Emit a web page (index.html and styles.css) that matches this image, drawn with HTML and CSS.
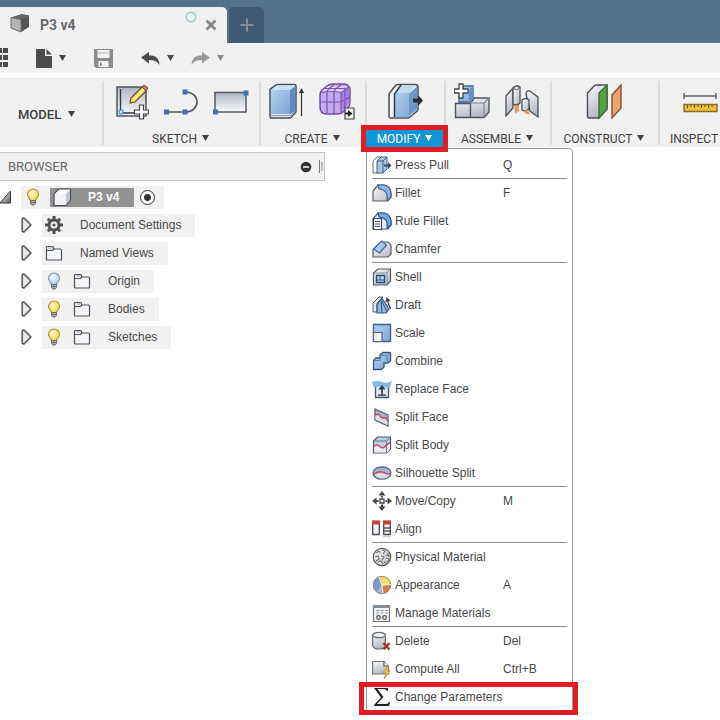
FILE: index.html
```html
<!DOCTYPE html>
<html lang="en">
<head>
<meta charset="utf-8">
<title>P3 v4</title>
<link rel="stylesheet" href="styles.css">
</head>
<body>
<svg class="defs" aria-hidden="true">
  <defs>
    <linearGradient id="blue" x1="0" y1="0" x2="1" y2="1"><stop offset="0" stop-color="#b4d0ee"/><stop offset="1" stop-color="#7ba6d8"/></linearGradient>
    <linearGradient id="grey" x1="0" y1="0" x2="1" y2="1"><stop offset="0" stop-color="#fbfbfc"/><stop offset="1" stop-color="#b4b8c0"/></linearGradient>
    <linearGradient id="sheet" x1="0" y1="0" x2="0" y2="1"><stop offset="0" stop-color="#b0b6c2"/><stop offset="1" stop-color="#fafbfd"/></linearGradient>
    <linearGradient id="plate" x1="0" y1="0" x2="0.4" y2="1"><stop offset="0" stop-color="#fafbfd"/><stop offset="1" stop-color="#b4b9c4"/></linearGradient>
    <linearGradient id="tri" x1="0" y1="0" x2="1" y2="1"><stop offset="0.2" stop-color="#f2f2f2"/><stop offset="1" stop-color="#555"/></linearGradient>
    <radialGradient id="lit" cx="0.4" cy="0.35" r="0.7"><stop offset="0" stop-color="#fffbd0"/><stop offset="1" stop-color="#f5d535"/></radialGradient>
    <radialGradient id="unlit" cx="0.4" cy="0.35" r="0.7"><stop offset="0" stop-color="#fff"/><stop offset="1" stop-color="#a9c8f2"/></radialGradient>
    <symbol id="caret" viewBox="0 0 7 6"><path d="M0 0h7L3.500 6z" fill="currentColor"/></symbol>
    <symbol id="toggle" viewBox="0 0 11 16"><path d="M1.200 1.500 3 1 10 8 3 15 1.200 14.500z" fill="#e6e6e6" stroke="#555" stroke-width="1.500" stroke-linejoin="round"/></symbol>
    <symbol id="folder" viewBox="0 0 18 18"><path d="M1.500 15.500v-12q0-1 1-1h5q1 0 1 1v1.500h7q1 0 1 1v9.500q0 .5-.5.5H2q-.5 0-.5-.5z" fill="#f5f6f8" stroke="#4c515c" stroke-width="1.200"/><path d="M2 6.500h5.500L9 5" fill="none" stroke="#4c515c" stroke-width="1.200"/><path d="M3.500 3.500h4v1h-4z" fill="#9aa0ac"/></symbol>
    <symbol id="bulb" viewBox="0 0 18 18"><path d="M9 1a5.500 5.500 0 0 0-5.500 5.500C3.500 9 6.300 10 6.300 12.500h5.400C11.700 10 14.500 9 14.500 6.500A5.500 5.500 0 0 0 9 1z" stroke-width="1.100"/><path d="M6.500 12.500h5v3.200L10 17H8l-1.500-1.300z" fill="#aeb2ba" stroke="#666b75"/><path d="M7 14.500h4" stroke="#666b75"/></symbol>
  </defs>
</svg>

<header class="tabs">
  <div class="tab">
    <svg class="tab-cube" viewBox="0 0 20 19"><path d="M1 3.500 12 0l7 1.500V13L11 18 1 14z" fill="#555"/><path d="M1 3.500 11 5.500V18L1 14z" fill="#b5b5b5" stroke="#6a6a6a"/><path d="M1 3.500 12 .500l7 1.500-8 3.500z" fill="#686868"/></svg>
    <span class="tab-title">P3 v4</span>
    <svg class="tab-status" viewBox="0 0 12 12"><circle cx="6" cy="6" r="4.800" fill="none" stroke="#93cfbf" stroke-width="1.500"/></svg>
    <button class="tab-close" aria-label="Close"><svg viewBox="0 0 12 12"><path d="m1.500 1.500 9 9m0-9-9 9" stroke="#888" stroke-width="2.800"/></svg></button>
  </div>
  <button class="tab-new" aria-label="New tab"><svg viewBox="0 0 14 14"><path d="M7 .500v13M.500 7h13" stroke="#878f98" stroke-width="2"/></svg></button>
</header>

<nav class="quickbar" aria-label="Quick access">
  <button aria-label="Data panel"><svg class="q-grid" viewBox="0 0 8 20"><path d="M0 0h2v5H0zM3 0h5v5H3zM0 7h2v5H0zM3 7h5v5H3zM0 14h2v5H0zM3 14h5v5H3z" fill="#4b4b4b"/></svg></button>
  <button aria-label="File"><svg class="q-doc" viewBox="0 0 16 19"><path d="M0 0h9v7h7v12H0z" fill="#4b4b4b"/><path d="M10.500 0 16 5.500h-5.500z" fill="#4b4b4b"/></svg><svg class="caret"><use href="#caret"/></svg></button>
  <button aria-label="Save"><svg class="q-save" viewBox="0 0 19 19"><path d="M0 0h19v19H2l-2-2z" fill="#8c8c8c"/><path d="M3.500 1h12v8h-12zM4.500 12h10v6h-10z" fill="#f3f3f3"/><path d="M3.500 4h12" stroke="#b5b5b5"/><path d="M6 13.500h1.500V17H6z" fill="#777"/></svg></button>
  <div class="history">
    <button aria-label="Undo"><svg class="q-arrow" viewBox="0 0 19 13"><path d="M0 5.500 8 0v3.500c6 0 10 1.500 10.500 9.500C16 9 13 8 8 8v3.500z" fill="#4b4b4b"/></svg><svg class="caret"><use href="#caret"/></svg></button>
    <button class="dim" aria-label="Redo"><svg class="q-arrow" viewBox="0 0 19 13"><path d="M19 5.500 11 0v3.500C5 3.500 1 5 .500 13 3 9 6 8 11 8v3.500z" fill="#999"/></svg><svg class="caret"><use href="#caret"/></svg></button>
  </div>
</nav>

<nav class="ribbon" aria-label="Toolbar">
  <div class="group model">
    <button class="label">MODEL <svg class="caret"><use href="#caret"/></svg></button>
  </div>
  <div class="group sketch">
    <div class="icons">
      <svg viewBox="0 0 36 40"><path d="M4 5h29v29H4z" fill="url(#sheet)" stroke="#50545e" stroke-width="1.500"/><path d="M7.500 7v24H30" fill="none" stroke="#30343c" stroke-width="1.300"/><path d="M6 28h4v4H6z" fill="#b5dcf5" stroke="#3a86c8"/><path d="m18 16 11-11q3 0 4 4L22 20l-5 1z" fill="#f6d958" stroke="#5d532c" stroke-width="1.200"/><path d="m20 18 11-11" stroke="#fff3ac" stroke-width="1.500"/><path d="m29 5 2-2 4 3-2 3z" fill="#c87c6c" stroke="#6a4a40"/><path d="M26.500 23h4v5h5v4h-5v5h-4v-5h-5v-4h5z" fill="#fff" stroke="#444" stroke-width="1.200"/></svg>
      <svg viewBox="0 0 36 40"><path d="M4 30h18c16 0 16-20 0-20" fill="none" stroke="#555" stroke-width="1.600"/><path d="M1 27.500h5v5H1zM19.500 27.500h5v5h-5zM19.500 7.500h5v5h-5z" fill="#3f6fbd"/></svg>
      <svg viewBox="0 0 36 40"><path d="M2 10.500h31v19.500H2z" fill="url(#sheet)" stroke="#555961" stroke-width="1.500"/><path d="M0 27.500h5v5H0zM30.500 8.500h5v5h-5z" fill="#3f6fbd"/></svg>
    </div>
    <button class="label">SKETCH <svg class="caret"><use href="#caret"/></svg></button>
  </div>
  <div class="group create">
    <div class="icons">
      <svg viewBox="0 0 36 40"><path d="M1 8q0-1 1-1.500L7 3q1-.5 2-.500h16.500q1.500 0 1.500 1.500V29q0 1-1 2l-4 4.500q-1 .5-2 .5H2.500Q1 36 1 34.500z" fill="#e4e6ea" stroke="#4a5059" stroke-width="1.500"/><path d="M2 8h19v24H2z" fill="url(#blue)"/><path d="M2 8 8 3.500h17.500L21 8z" fill="#cfe1f4"/><path d="M21 8 26.300 4v25L21 32z" fill="#628bbd"/><path d="M2 33.500h19l5-4" fill="none" stroke="#99a"/><path d="M32.500 34V9" stroke="#333" stroke-width="1.200"/><path d="m32.500 6 2.500 5h-5z" fill="#333"/></svg>
      <svg viewBox="0 0 36 40"><path d="M1 13Q1 9 4 7l4-3q2-2 6-2h10q6 0 7 5v12q0 6-4 9l-3 2q-2 2-6 2H8q-7 0-7-7z" fill="#c9a8f2" stroke="#6d49a3" stroke-width="1.400"/><path d="M3 10q2-3 6-6h18l-5 6z" fill="#e2cffc"/><path d="M22 10q5-3 8-4v14q-3 6-8 10z" fill="#a981e0"/><path d="M2 10.500q10-2 20 0 5-2 8-6M1 20h21l9-5M8 9v22M15 9v23M22 10v20M8 9q3-4 7-6M15 9q3-4 7-6M5 6.500h21v20" fill="none" stroke="#7654aa" stroke-width="1.200"/><path d="M26 26h9v11h-9z" fill="#f3f3f3" stroke="#444" stroke-width="1.200"/><path d="M26 30.500h3V28l4.500 3.500L29 35v-2.500h-3z" fill="#222"/></svg>
    </div>
    <button class="label">CREATE <svg class="caret"><use href="#caret"/></svg></button>
  </div>
  <div class="group modify">
    <div class="icons">
      <svg viewBox="0 0 36 40"><path d="M2 12 8 4q1-1.500 3-1.500h17q3 0 3 3V27q0 2-2 3l-6 5q-1 1-3 1H4q-2 0-2-2z" fill="#f1f3f6" stroke="#4a5059" stroke-width="1.500"/><path d="M8 12 14 4h13l-5 8v23H8z" fill="url(#blue)"/><path d="m9 11 6-7.500h13L22 11z" fill="#c3daf3"/><path d="M22 12 30.200 4v23L22 34z" fill="#6b97ca"/><path d="M7.500 35V12L14 3" fill="none" stroke="#343a43" stroke-width="1.500"/><path d="M26 16.500h5V13l5 5.500-5 5.500v-3.500h-5z" fill="#2d2d2d"/></svg>
    </div>
    <button class="label active" aria-expanded="true">MODIFY <svg class="caret"><use href="#caret"/></svg></button>
    <ul class="menu">
      <li><button><svg viewBox="0 0 20 20"><path d="M1 6 5 2h5v13l-4 3H1z" fill="#fff" stroke="#5b6b7f"/><path d="M5 6 9 2h6v12l-4 4H5z" fill="#a9c7e9" stroke="#4b607b"/><path d="m11 6 4-4M5 6h6v12" fill="none" stroke="#4b607b"/><path d="M12 9.500h4V7l3.500 3.500L16 14v-2.500h-4z" fill="#454b54"/></svg><span>Press Pull</span><kbd>Q</kbd></button></li>
      <li class="split"><button><svg viewBox="0 0 20 20"><path d="M1 8 6 2h6q6 1 7 8v4l-3 4H1z" fill="url(#grey)" stroke="#565c67" stroke-width="1.200"/><path d="M6 2h6q6 1 7 8v4l-4 3c1-8-2-10-8-11z" fill="#8db6e6" stroke="#42608a" stroke-width="1.200"/></svg><span>Fillet</span><kbd>F</kbd></button></li>
      <li><button><svg viewBox="0 0 20 20"><path d="M1 8 6 2h6q6 1 7 8v4l-3 4H1z" fill="#eef" stroke="#42608a" stroke-width="1.200"/><path d="M6 2h6q6 1 7 8v4l-4 3c1-8-2-10-8-11z" fill="#72a8e6" stroke="#34548a" stroke-width="1.200"/><path d="M1.500 7.500h8v11h-8z" fill="#fff" stroke="#36465b" stroke-width="1.200"/><path d="M3 10.500h5M3 13h5M3 15.500h5" stroke="#36465b"/></svg><span>Rule Fillet</span></button></li>
      <li><button><svg viewBox="0 0 20 20"><path d="M1 11 9 3h7l3 3v9l-3 3H1z" fill="url(#grey)" stroke="#565c67" stroke-width="1.200"/><path d="m1.500 10 8-8 5 4-7 8z" fill="#a9cbf0" stroke="#45648c" stroke-width="1.200"/></svg><span>Chamfer</span></button></li>
      <li class="split"><button><svg viewBox="0 0 20 20"><path d="M1.500 6 6 2h12.500v12L15 18H1.500z" fill="url(#grey)" stroke="#50565f" stroke-width="1.200"/><path d="M2 6h13v12M15 6l3-4" fill="none" stroke="#868c96"/><path d="M4.500 8.500h8v7h-8z" fill="#c6def4" stroke="#234a78" stroke-width="1.400"/><path d="M8 9v4H5M8 13h4" stroke="#234a78" fill="none"/></svg><span>Shell</span></button></li>
      <li><button><svg viewBox="0 0 20 20"><path d="M1 17V8l6-6h4L5 9v8z" fill="#e6e8ec" stroke="#565c67"/><path d="m5 9 5-6 7 11-3 4H5z" fill="#8db3df" stroke="#3f587a" stroke-width="1.200"/><path d="m9 4 1 14M10 6l5 11" stroke="#3f587a"/><path d="m18.500 14-3-8" stroke="#444" stroke-width="1.300"/><path d="m13.500 7 1-5 4 4z" fill="#444"/></svg><span>Draft</span></button></li>
      <li><button><svg viewBox="0 0 20 20"><path d="M1.500 1.500h17v17h-17z" fill="url(#blue)" stroke="#426089" stroke-width="1.400"/><path d="M1.500 9.500h8.500v9H1.500z" fill="#f1f2f4" stroke="#5d6673" stroke-width="1.200"/></svg><span>Scale</span></button></li>
      <li><button><svg viewBox="0 0 20 20"><path d="M1.500 9.500 4 7h4V4l3-2.500h7.500V10L16 12h-4v4l-2.500 2.500h-8z" fill="url(#blue)" stroke="#395374" stroke-width="1.300" stroke-linejoin="round"/><path d="M2 9.500h6V7M8 4.500h7v7M15 4.500l3-3" stroke="#5a80ae" fill="none"/></svg><span>Combine</span></button></li>
      <li><button><svg viewBox="0 0 20 20"><path d="M3.500 5h13v13.500h-13z" fill="#e1e5ea" stroke="#4a5565" stroke-width="1.300"/><path d="M0 3q5-2 10 0t10-1l-2 6q-4 1-8 0t-8 1z" fill="#8cb8e8"/><path d="M10 16V9" stroke="#223a5c" stroke-width="1.600"/><path d="m10 6 3.500 4.500h-7zM6 15.500h8v1.300H6z" fill="#223a5c"/></svg><span>Replace Face</span></button></li>
      <li><button><svg viewBox="0 0 20 20"><path d="m3 2 13 6v11L3 13z" fill="#a5b4c9" stroke="#556379" stroke-width="1.300"/><path d="m3.500 8 3-1 4 5 2-1 3 3v4l-12-5.500z" fill="#dce1e8"/><path d="m3 8 3-1 4 4 3-.5 3 3.500" fill="none" stroke="#cb464d" stroke-width="1.400"/></svg><span>Split Face</span></button></li>
      <li><button><svg viewBox="0 0 20 20"><path d="m1.500 6 4-4h13v12l-4 4h-13z" fill="#c0d0e4" stroke="#4c5663" stroke-width="1.200"/><path d="M2 11.500q3-3 6 0t6-1l4-3V14l-3 3.500H2z" fill="#e7e8eb"/><path d="M2 11.500q3-3 6 0t6-1l4-3" fill="none" stroke="#cb464d" stroke-width="1.400"/><path d="M2 6h12.500v12M14.500 6l4-4" fill="none" stroke="#6b7787"/></svg><span>Split Body</span></button></li>
      <li><button><svg viewBox="0 0 20 20"><ellipse cx="10" cy="10" rx="9" ry="6.200" fill="#9cb6d8" stroke="#555f70" stroke-width="1.200"/><path d="M2 11q8-2 16 0-2 5-8 4.500T2 11z" fill="#d8dce2"/><path d="M2 11c3-1 4-3 8-2s4 2 8 2" fill="none" stroke="#cb464d" stroke-width="1.500"/></svg><span>Silhouette Split</span></button></li>
      <li class="split"><button><svg viewBox="0 0 20 20"><path d="M8 8h4v4H8z" fill="#fff" stroke="#444" stroke-width="1.300"/><path d="M10 0 6.500 4.500h7zM10 20l-3.500-4.500h7zM0 10l4.500-3.500v7zM20 10l-4.500-3.500v7zM9 4h2v2.500H9zM9 13.500h2V16H9zM4 9h2.500v2H4zM13.500 9H16v2h-2.500z" fill="#444"/></svg><span>Move/Copy</span><kbd>M</kbd></button></li>
      <li><button><svg viewBox="0 0 20 20"><path d="M.7 2.500h6.600v13H.7zM11.700 2.500h6.600v13h-6.600z" fill="#f4f4f5" stroke="#434952" stroke-width="1.300"/><path d="M0 1.500h8v4H0zM11 1.500h8v4h-8z" fill="#c74432"/><path d="M12 9h6M12 12h6" stroke="#555" stroke-width="1.300"/><path d="M11 17.500h8" stroke="#ccc" stroke-width="1.500"/></svg><span>Align</span></button></li>
      <li class="split"><button><svg viewBox="0 0 20 20"><circle cx="10" cy="10" r="8.700" fill="url(#grey)" stroke="#555" stroke-width="1.200"/><path d="m4 6 3-2 1 2M10 3l3 1-2 3M15 6l2 3-3-1M3 10l3-1 1 3-3 2M9 9l3 1-2 3M14 11l3 1-2 3M6 15l3-1 2 3M12 15l2 1" fill="#fff" stroke="#6a6a6a" stroke-width="1.100"/></svg><span>Physical Material</span></button></li>
      <li><button><svg viewBox="0 0 20 20"><path d="M10 10 7 1.500A9 9 0 0 0 5 17.500z" fill="#789bd0"/><path d="M10 10 7 1.500A9 9 0 0 1 19 9.500z" fill="#f4d45b"/><path d="m10 10 9-.5A9 9 0 0 1 11 19z" fill="#dd7949"/><path d="m10 10 1 9a9 9 0 0 1-6-1.500z" fill="#a8b7ce"/><path d="m10 10 2-7 6 5-6 3z" fill="#f9df6c"/><circle cx="10" cy="10" r="8.700" fill="none" stroke="#8f8b86"/><path d="M10 10 7 2M10 10l9-.5M10 10l1 8.500" stroke="#f5efe0"/></svg><span>Appearance</span><kbd>A</kbd></button></li>
      <li><button><svg viewBox="0 0 20 20"><path d="M1.500 2.500h16v16h-16z" fill="#f3f4f5" stroke="#6b737e" stroke-width="1.200"/><path d="M1 2h17v3H1z" fill="#858d98"/><path d="M4 7.500h3M8.500 7.500h3M13 7.500h3M4 10h3M8.500 10h3M13 10h3" stroke="#878f9a" stroke-width="1.200"/><circle cx="6.500" cy="14.500" r="1.800" fill="#fff" stroke="#444" stroke-width="1.200"/><circle cx="12.500" cy="14.500" r="1.800" fill="#fff" stroke="#444" stroke-width="1.200"/></svg><span>Manage Materials</span></button></li>
      <li class="split"><button><svg viewBox="0 0 20 20"><path d="M.7 4v11q1 3 6.300 3t6.300-3V4z" fill="url(#plate)" stroke="#656c76" stroke-width="1.200"/><ellipse cx="7" cy="4" rx="6.300" ry="2.700" fill="#eff1f3" stroke="#656c76" stroke-width="1.200"/><path d="m11.500 12 6 6.500m0-6.500-6 6.500" stroke="#b22d22" stroke-width="2.400"/></svg><span>Delete</span><kbd>Del</kbd></button></li>
      <li><button><svg viewBox="0 0 20 20"><path d="M.6 2.500H12L16.500 7v8H.6z" fill="url(#plate)" stroke="#6f757f" stroke-width="1.200"/><path d="M12 2.500V7h4.500" fill="#fff" stroke="#4e535b" stroke-width="1.200"/><path d="m15 8-4 6h3l-2 6 6-8h-3l2-4z" fill="#f8c442" stroke="#c08a2d" stroke-width=".8"/></svg><span>Compute All</span><kbd>Ctrl+B</kbd></button></li>
      <li class="marked"><button><svg viewBox="0 0 20 20"><path d="M2 1h14v3h-1q-1-2-3-2H5.500l6 8L5 17h9q2 0 3-2h1l-1 4H2v-1l7-7.500z" fill="#222"/></svg><span>Change Parameters</span></button></li>
    </ul>
  </div>
  <div class="group assemble">
    <div class="icons">
      <svg viewBox="0 0 36 40"><path d="m5 10 5-6h9v16H5z" fill="url(#blue)" stroke="#4a6488" stroke-width="1.300"/><path d="M1.500 21.500h15v14h-15zM16.500 21l4-5H35v14l-5 5.500H16.500z" fill="url(#plate)" stroke="#50545c" stroke-width="1.400"/><path d="m15 8 5-5v13l-4 5h-1z" fill="#6892c5"/><path d="M16.500 21H30v14.500M30 21l5-5" fill="none" stroke="#80868f" stroke-width="1.200"/><path d="M5 2h4v5h5v4H9v5H5v-5H0V7h5z" fill="#fff" stroke="#444" stroke-width="1.300"/></svg>
      <svg viewBox="0 0 36 40"><path d="m10 18 5-2v13l-4 3z" fill="#e89a6d"/><path d="m2 14 7-8v20l-7 8z" fill="url(#plate)" stroke="#4b4f56" stroke-width="1.300"/><path d="M9 6q4-4 7-1v16q-3 3-7 1z" fill="url(#grey)" stroke="#4b4f56" stroke-width="1.300"/><ellipse cx="12.500" cy="6" rx="2.500" ry="1.500" fill="#fff" stroke="#666"/><path d="M22 12q0-4 4-3l8 6v20l-8-6z" fill="url(#plate)" stroke="#4b4f56" stroke-width="1.300"/><path d="M18 18q4-3 7 0v9q-3 3-7 1z" fill="url(#grey)" stroke="#4b4f56" stroke-width="1.300"/><path d="m19 29 5-1 2 4h-4z" fill="#e89a6d"/></svg>
    </div>
    <button class="label">ASSEMBLE <svg class="caret"><use href="#caret"/></svg></button>
  </div>
  <div class="group construct">
    <div class="icons">
      <svg viewBox="0 0 36 40"><path d="M1.500 11 8 4q1-1 2.500-1H21v24l-8 9H3q-1.500 0-1.500-1.500z" fill="url(#plate)" stroke="#4b5057" stroke-width="1.400"/><path d="m13 11 8-8v24l-8 9z" fill="#58a348" stroke="#376934" stroke-width="1.300"/><path d="m26 13 9-10v23l-9 10z" fill="#f0a26d" stroke="#84503a" stroke-width="1.400"/></svg>
    </div>
    <button class="label">CONSTRUCT <svg class="caret"><use href="#caret"/></svg></button>
  </div>
  <div class="group inspect">
    <div class="icons">
      <svg viewBox="0 0 36 40"><path d="M2 14h32M2 11v6M34 11v6" stroke="#666" stroke-width="1.500"/><path d="M2 22.500h33v7H2z" fill="#edbf3f" stroke="#8c6c2d" stroke-width="1.400"/><path d="M5.500 23v3M9 23v2M12.500 23v3M16 23v2M19.500 23v3M23 23v2M26.500 23v3M30 23v2" stroke="#704f11"/></svg>
    </div>
    <button class="label">INSPECT <svg class="caret"><use href="#caret"/></svg></button>
  </div>
</nav>

<main>
  <section class="browser">
    <div class="browser-head">
      <h2>BROWSER</h2>
      <button aria-label="Collapse"><svg class="minus" viewBox="0 0 12 12"><circle cx="6" cy="6" r="5.300" fill="#333"/><path d="M3 6h6" stroke="#fff" stroke-width="1.500"/></svg></button>
      <span class="grip"></span>
    </div>
    <ul class="tree">
      <li class="root">
        <svg class="toggle" viewBox="0 0 11 16"><path d="M10.500 2v12H0z" fill="url(#tri)" stroke="#333"/></svg>
        <div class="node">
          <svg class="lit"><use href="#bulb"/></svg>
          <span class="name"><svg viewBox="0 0 20 20"><path d="M2 7 7 2h11.500v11L14 18.500H2z" fill="#f0f2f5" stroke="#484e59" stroke-width="1.200" stroke-linejoin="round"/><path d="m3 7 4-4h11l-4 4z" fill="#fff"/><path d="m14 7 4-4v10l-4 5z" fill="#bcc2cc"/></svg><b>P3 v4</b></span>
          <input type="radio" name="component" aria-label="Activate P3 v4" checked>
        </div>
      </li>
      <li><svg class="toggle"><use href="#toggle"/></svg><div class="node"><svg viewBox="0 0 18 18"><path d="M9 0v18M0 9h18M2.800 2.800l12.400 12.400M15.200 2.800 2.800 15.200" stroke="#505050" stroke-width="3"/><circle cx="9" cy="9" r="5" fill="#eee" stroke="#505050" stroke-width="3"/><circle cx="9" cy="9" r="1.500" fill="#505050"/></svg><span>Document Settings</span></div></li>
      <li><svg class="toggle"><use href="#toggle"/></svg><div class="node"><svg><use href="#folder"/></svg><span>Named Views</span></div></li>
      <li><svg class="toggle"><use href="#toggle"/></svg><div class="node"><svg class="unlit"><use href="#bulb"/></svg><svg><use href="#folder"/></svg><span>Origin</span></div></li>
      <li><svg class="toggle"><use href="#toggle"/></svg><div class="node"><svg class="lit"><use href="#bulb"/></svg><svg><use href="#folder"/></svg><span>Bodies</span></div></li>
      <li><svg class="toggle"><use href="#toggle"/></svg><div class="node"><svg class="lit"><use href="#bulb"/></svg><svg><use href="#folder"/></svg><span>Sketches</span></div></li>
    </ul>
  </section>
</main>
</body>
</html>
```
FILE: styles.css
```css
* {
  box-sizing: border-box;
}

body {
  margin: 0;
  min-height: 100vh;
  overflow: hidden;
  background: #fff;
  color: #484848;
  font: 12px/16px "Liberation Sans", Arial, sans-serif;
}

button {
  display: flex;
  align-items: center;
  margin: 0;
  padding: 0;
  border: 0;
  background: none;
  color: inherit;
  font: inherit;
}

svg {
  display: block;
  flex: none;
}

ul {
  margin: 0;
  padding: 0;
  list-style: none;
}

.defs {
  position: absolute;
  width: 0;
  height: 0;
}

.caret {
  width: 7px;
  height: 6px;
}

/* Document tabs */
.tabs {
  display: flex;
  align-items: flex-end;
  gap: 2px;
  padding-top: 7px;
  background: #54728e;
}

.tab {
  display: flex;
  align-items: center;
  width: 227px;
  height: 36px;
  padding: 0 10px;
  border-radius: 0 5px 0 0;
  background: #f1f1f3;
}

.tab-cube {
  width: 20px;
  height: 19px;
  margin-bottom: 4px;
}

.tab-title {
  flex: 1;
  margin-left: 10px;
  color: #6a6a6a;
  font: 700 14px/20px Roboto, sans-serif;
}

.tab-status {
  align-self: flex-start;
  width: 12px;
  height: 12px;
  margin: 4px 8px 0 0;
}

.tab-close svg {
  width: 12px;
  height: 12px;
}

.tab-new {
  justify-content: center;
  width: 35px;
  height: 36px;
  border-radius: 5px 5px 0 0;
  background: #405a73;
}

.tab-new svg {
  width: 14px;
  height: 14px;
}

/* Quick access bar */
.quickbar {
  display: flex;
  align-items: center;
  gap: 28px;
  height: 30px;
  background: #f1f1f1;
}

.quickbar button {
  gap: 7px;
}

.history {
  display: flex;
  gap: 17px;
}

.dim {
  color: #8c8c8c;
}

.q-grid {
  width: 8px;
  height: 20px;
}

.q-doc {
  width: 16px;
  height: 19px;
}

.q-save {
  width: 19px;
  height: 19px;
}

.q-arrow {
  width: 19px;
  height: 13px;
}

/* Ribbon */
.ribbon {
  display: flex;
  margin-top: 5px;
  border-top: 1px solid #ececec;
  background: #f1f1f1;
}

.group {
  position: relative;
  display: flex;
  flex: none;
  flex-direction: column;
  align-items: center;
  gap: 8px;
  padding-top: 3px;
  background: linear-gradient(#dcdcdc, #dcdcdc) 0 2px / 2px calc(100% - 4px) no-repeat;
}

.model {
  align-items: flex-start;
  justify-content: center;
  width: 102px;
  padding-left: 18px;
  background: none;
}

.sketch {
  width: 157px;
}

.create {
  width: 106px;
}

.modify {
  width: 79px;
}

.assemble {
  width: 106px;
}

.construct {
  width: 108px;
}

.inspect {
  width: 84px;
}

.icons {
  display: flex;
  gap: 14px;
}

.icons svg {
  width: 36px;
  height: 40px;
}

.label {
  gap: 5px;
  height: 17px;
  padding-top: 1px;
  color: #404040;
  font: 12px/16px Roboto, sans-serif;
  white-space: nowrap;
}

.label .caret {
  margin-bottom: 2px;
}

.model .label {
  gap: 7px;
  font-size: 13px;
  font-weight: 500;
}

.label.active {
  z-index: 2;
  justify-content: center;
  width: 77px;
  outline: 5px solid #e31b23;
  background: #1095d6;
  color: #fff;
}

/* Drop-down menu */
.menu {
  position: absolute;
  z-index: 1;
  top: calc(100% + 1px);
  left: 1px;
  width: 207px;
  padding-top: 1px;
  border: 1px solid #999;
  border-radius: 0 4px 0 0;
  background: #fff;
}

.menu li {
  position: relative;
  padding: 0 5px;
}

.menu .split {
  background: linear-gradient(#8c8c8c, #8c8c8c) 50% 0 / calc(100% - 10px) 1px no-repeat;
}

.menu button {
  display: grid;
  grid-template-columns: 20px 105px 1fr;
  column-gap: 3px;
  width: 100%;
  height: 28px;
  padding-top: 1px;
  text-align: left;
  white-space: nowrap;
}

.menu svg {
  width: 20px;
  height: 20px;
}

.menu kbd {
  font: inherit;
}

.marked::after {
  position: absolute;
  inset: 0 -6px -5px -8px;
  border: 5px solid #e31b23;
  content: "";
}

/* Browser panel */
.browser {
  width: 325px;
  max-width: 100%;
  margin-top: 5px;
}

.browser-head {
  display: flex;
  align-items: center;
  height: 29px;
  padding: 0 1px 0 8px;
  border: 1px solid #c6c6c6;
  border-left: 0;
  background: #f1f1f1;
}

.browser-head h2 {
  flex: 1;
  margin: 0;
  color: #666;
  font: 13px/16px Roboto, sans-serif;
}

.minus {
  width: 12px;
  height: 12px;
}

.grip {
  width: 4px;
  height: 13px;
  margin-left: 7px;
  border-left: 1px solid #777;
  background: linear-gradient(#bbb, #bbb) 100% 50% / 2px 9px no-repeat;
}

.tree {
  margin-top: 2px;
}

.tree li {
  display: flex;
  align-items: center;
  gap: 10px;
  height: 28px;
  padding-left: 21px;
}

.tree .root {
  padding-left: 0;
}

.toggle {
  width: 11px;
  height: 16px;
}

.node {
  display: flex;
  align-items: center;
  gap: 10px;
  height: 23px;
  padding: 0 14px 0 3px;
  background: #f1f1f1;
}

.node svg {
  width: 18px;
  height: 18px;
}

.node > span {
  margin-left: 7px;
}

.lit {
  fill: url(#lit);
  stroke: #a88d28;
}

.unlit {
  fill: url(#unlit);
  stroke: #7590b5;
}

.root .node {
  gap: 6px;
  padding-right: 9px;
}

.root .name {
  display: flex;
  align-items: center;
  gap: 16px;
  height: 19px;
  margin-left: 2px;
  padding: 0 15px 0 2px;
  background: #929292;
  color: #fff;
}

.name svg {
  width: 20px;
  height: 20px;
}

.node input {
  width: 15px;
  height: 15px;
  margin: 0;
  border: 1px solid #333;
  border-radius: 50%;
  background: radial-gradient(circle, #333 3px, #fff 4px);
  appearance: none;
}
```
